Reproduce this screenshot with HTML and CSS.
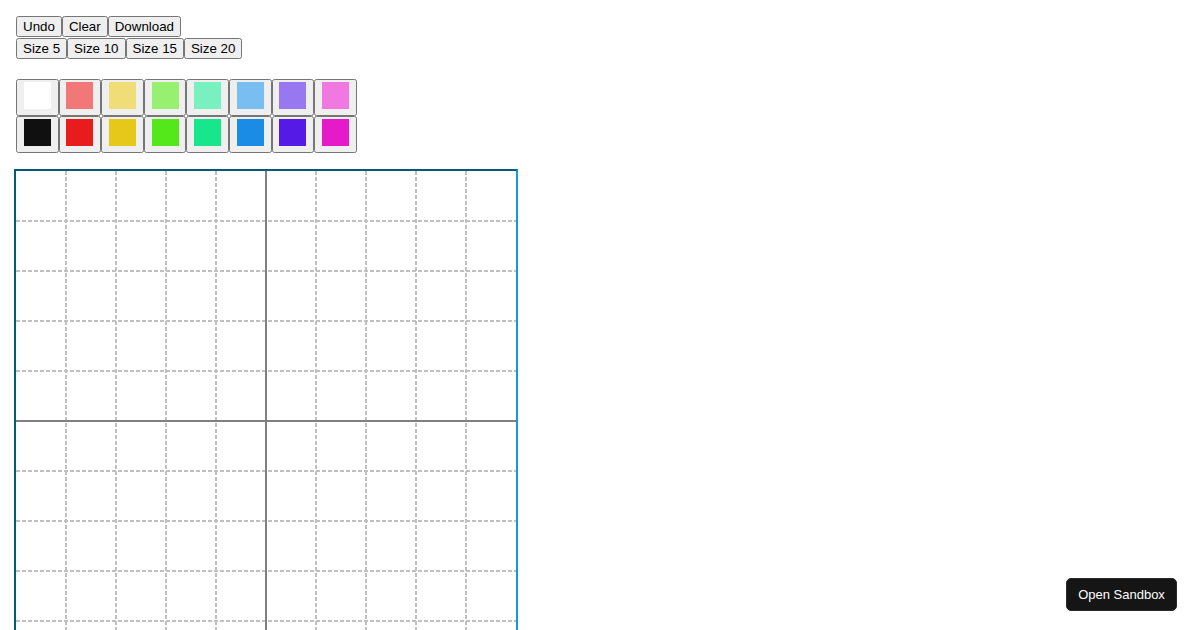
FILE: index.html
```html
<!DOCTYPE html>
<html>
<head>
<meta charset="utf-8">
<link rel="stylesheet" href="styles.css">
</head>
<body>
<div class="app">
  <div class="row"><button class="btn">Undo</button><button class="btn">Clear</button><button class="btn">Download</button></div>
  <div class="row"><button class="btn">Size 5</button><button class="btn">Size 10</button><button class="btn">Size 15</button><button class="btn">Size 20</button></div>
  <div class="palette">
    <div class="prow">
      <button class="sw"><span style="background:#ffffff"></span></button><button class="sw"><span style="background:#f27878"></span></button><button class="sw"><span style="background:#f0dd78"></span></button><button class="sw"><span style="background:#98f070"></span></button><button class="sw"><span style="background:#78f0c0"></span></button><button class="sw"><span style="background:#78bef0"></span></button><button class="sw"><span style="background:#9878f0"></span></button><button class="sw"><span style="background:#f078e0"></span></button>
    </div>
    <div class="prow">
      <button class="sw"><span style="background:#101010"></span></button><button class="sw"><span style="background:#e81c1c"></span></button><button class="sw"><span style="background:#e6c81a"></span></button><button class="sw"><span style="background:#54e81a"></span></button><button class="sw"><span style="background:#18e68c"></span></button><button class="sw"><span style="background:#1a8ce6"></span></button><button class="sw"><span style="background:#561ae6"></span></button><button class="sw"><span style="background:#e61ac8"></span></button>
    </div>
  </div>
  <div class="board">
    <svg width="500" height="500" viewBox="0 0 500 500">
      <g stroke="#c0c0c0" stroke-width="2" stroke-dasharray="4 2">
        <line x1="50" y1="0" x2="50" y2="500"/>
        <line x1="100" y1="0" x2="100" y2="500"/>
        <line x1="150" y1="0" x2="150" y2="500"/>
        <line x1="200" y1="0" x2="200" y2="500"/>
        <line x1="300" y1="0" x2="300" y2="500"/>
        <line x1="350" y1="0" x2="350" y2="500"/>
        <line x1="400" y1="0" x2="400" y2="500"/>
        <line x1="450" y1="0" x2="450" y2="500"/>
        <line x1="0" y1="50" x2="500" y2="50"/>
        <line x1="0" y1="100" x2="500" y2="100"/>
        <line x1="0" y1="150" x2="500" y2="150"/>
        <line x1="0" y1="200" x2="500" y2="200"/>
        <line x1="0" y1="300" x2="500" y2="300"/>
        <line x1="0" y1="350" x2="500" y2="350"/>
        <line x1="0" y1="400" x2="500" y2="400"/>
        <line x1="0" y1="450" x2="500" y2="450"/>
      </g>
      <g stroke="#808080" stroke-width="2">
        <line x1="250" y1="0" x2="250" y2="500"/>
        <line x1="0" y1="250" x2="500" y2="250"/>
      </g>
    </svg>
  </div>
</div>
<button class="sandbox">Open Sandbox</button>
</body>
</html>
```

FILE: styles.css
```css
html, body {
  margin: 0;
  padding: 0;
  background: #ffffff;
}
.app {
  padding: 16px;
  font-family: "Liberation Sans", Arial, sans-serif;
}
.row {
  display: flex;
  height: 22px;
  align-items: flex-start;
}
.btn {
  font-family: "Liberation Sans", Arial, sans-serif;
  font-size: 13.333px;
  padding: 1px 5px;
  height: 21px;
  margin: 0;
}
.palette {
  margin-top: 19px;
}
.prow {
  display: flex;
  height: 37px;
}
.sw {
  width: 42.6px;
  height: 36.5px;
  margin: 0;
  padding: 1px 6px 4px;
  display: flex;
  align-items: flex-start;
  justify-content: center;
}
.sw span {
  display: block;
  width: 27px;
  height: 27px;
  flex: none;
}
.board {
  margin-top: 16px;
  margin-left: -2px;
  width: 500px;
  height: 500px;
  border: 2px solid;
  border-color: #035b78 #149dd4 #149dd4 #035b78;
}
.board svg {
  display: block;
}
.sandbox {
  position: fixed;
  right: 23px;
  bottom: 19px;
  width: 111px;
  height: 33px;
  background: #151515;
  color: #ffffff;
  border: 1px solid #2a2a2a;
  border-radius: 5px;
  font-family: "Liberation Sans", Arial, sans-serif;
  font-size: 13px;
  padding: 0;
}
```
